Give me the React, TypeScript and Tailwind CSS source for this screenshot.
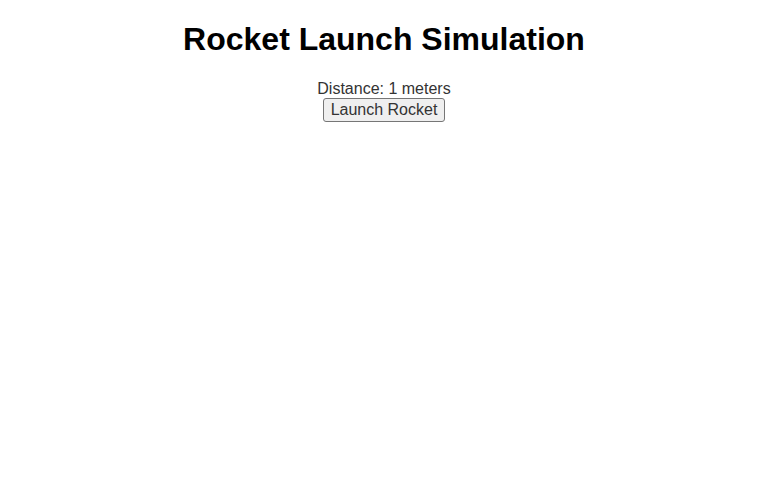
export default function App() {
  return (
    <div className="text-center text-black bg-white" style={{ fontFamily: '"Liberation Sans", Arial, sans-serif' }}>
      <h1 className="text-[32px] font-bold leading-[37px] pt-[21px] pb-[22px]">Rocket Launch Simulation</h1>
      <div className="text-[16px] leading-[18px] text-[#333]">
        <p>Distance: 1 meters</p>
        <button className="text-[16px] leading-[18px] text-[#333] px-[7px] py-[2px] bg-[#efefef] border border-[#767676] rounded-[3px]">
          Launch Rocket
        </button>
      </div>
    </div>
  );
}
